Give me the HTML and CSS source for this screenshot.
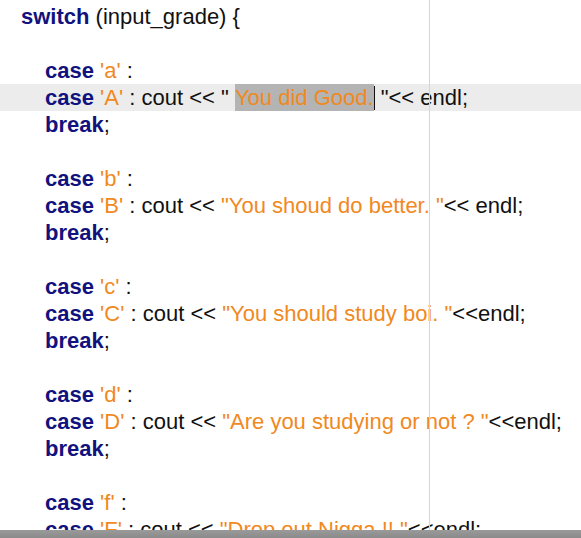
FILE: index.html
```html
<!DOCTYPE html>
<html>
<head>
<meta charset="utf-8">
<link rel="stylesheet" href="styles.css">
</head>
<body>
<div class="screen">
  <div class="editor">
    <div class="code">
      <div class="line lv0"><span class="kw">switch</span> (input_grade) {</div>
      <div class="line"></div>
      <div class="line lv1"><span class="kw">case</span> <span class="str">'a'</span> :</div>
      <div class="line lv1 current"><span class="kw">case</span> <span class="str">'A'</span> : cout &lt;&lt; " <span class="sel str">You did Good.</span><span class="caret"></span> "&lt;&lt; endl;</div>
      <div class="line lv1"><span class="kw">break</span>;</div>
      <div class="line"></div>
      <div class="line lv1"><span class="kw">case</span> <span class="str">'b'</span> :</div>
      <div class="line lv1"><span class="kw">case</span> <span class="str">'B'</span> : cout &lt;&lt; <span class="str">"You shoud do better. "</span>&lt;&lt; endl;</div>
      <div class="line lv1"><span class="kw">break</span>;</div>
      <div class="line"></div>
      <div class="line lv1"><span class="kw">case</span> <span class="str">'c'</span> :</div>
      <div class="line lv1"><span class="kw">case</span> <span class="str">'C'</span> : cout &lt;&lt; <span class="str">"You should study boi. "</span>&lt;&lt;endl;</div>
      <div class="line lv1"><span class="kw">break</span>;</div>
      <div class="line"></div>
      <div class="line lv1"><span class="kw">case</span> <span class="str">'d'</span> :</div>
      <div class="line lv1"><span class="kw">case</span> <span class="str">'D'</span> : cout &lt;&lt; <span class="str">"Are you studying or not ? "</span>&lt;&lt;endl;</div>
      <div class="line lv1"><span class="kw">break</span>;</div>
      <div class="line"></div>
      <div class="line lv1"><span class="kw">case</span> <span class="str">'f'</span> :</div>
      <div class="line lv1"><span class="kw">case</span> <span class="str">'F'</span> : cout &lt;&lt; <span class="str">"Drop out Nigga !! "</span>&lt;&lt;endl;</div>
    </div>
    <div class="guide"></div>
  </div>
  <div class="statusbar"></div>
</div>
</body>
</html>
```

FILE: styles.css
```css
html, body {
  margin: 0;
  padding: 0;
  background: #ffffff;
}

.screen {
  width: 581px;
  height: 538px;
  display: flex;
  flex-direction: column;
  overflow: hidden;
}

.editor {
  position: relative;
  flex: 1;
  overflow: hidden;
}

.code {
  padding-top: 3px;
  display: flex;
  flex-direction: column;
  font-family: "Liberation Sans", Arial, sans-serif;
  font-size: 22px;
  color: #111111;
}

.line {
  height: 27px;
  line-height: 27px;
  white-space: pre;
  flex-shrink: 0;
}

.lv0 { padding-left: 21px; }
.lv1 { padding-left: 45px; }

.current { background: #ececec; }

.kw {
  color: #12127e;
  font-weight: bold;
}

.str { color: #f0891e; }

.sel {
  background: #b4b4b4;
  display: inline-block;
  height: 27px;
}

.caret {
  display: inline-block;
  width: 1px;
  height: 24px;
  background: #111111;
  vertical-align: -5px;
}

.guide {
  position: absolute;
  top: 0;
  bottom: 0;
  left: 429px;
  width: 1px;
  background: #cdd8da;
}

.statusbar {
  height: 8px;
  flex-shrink: 0;
  background: linear-gradient(#9a9a9a, #8a8a8a);
}
```
